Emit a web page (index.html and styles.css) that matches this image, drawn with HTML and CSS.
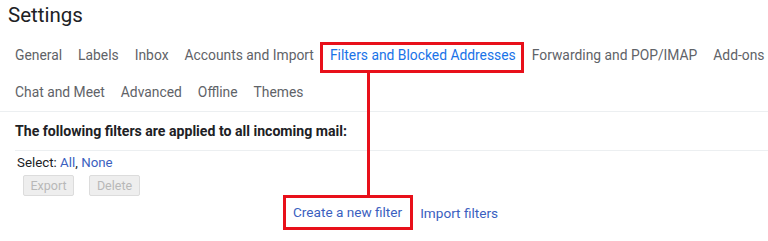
FILE: index.html
```html
<!DOCTYPE html>
<html>
<head>
<meta charset="utf-8">
<link rel="stylesheet" href="styles.css">
</head>
<body>
<div class="page">
  <h1 class="title">Settings</h1>
  <nav class="tabs">
    <span class="tab">General</span>
    <span class="tab">Labels</span>
    <span class="tab">Inbox</span>
    <span class="tab">Accounts and Import</span>
    <span class="tab active">Filters and Blocked Addresses</span>
    <span class="tab">Forwarding and POP/IMAP</span>
    <span class="tab">Add-ons</span>
    <span class="tab">Chat and Meet</span>
    <span class="tab">Advanced</span>
    <span class="tab">Offline</span>
    <span class="tab">Themes</span>
  </nav>
  <div class="heading">The following filters are applied to all incoming mail:</div>
  <div class="select">Select: <a class="link">All</a>, <a class="link">None</a></div>
  <div class="buttons">
    <span class="btn">Export</span>
    <span class="btn">Delete</span>
  </div>
  <div class="actions">
    <a class="link create">Create a new filter</a>
    <a class="link">Import filters</a>
  </div>
</div>
</body>
</html>
```

FILE: styles.css
```css
* { box-sizing: border-box; }
html, body { margin: 0; padding: 0; background: #fff; }
body {
  font-family: Roboto, "Liberation Sans", Arial, sans-serif;
  color: #202124;
  width: 768px;
  height: 241px;
  overflow: hidden;
}
.page { width: 768px; overflow: hidden; }
.title {
  margin: 0;
  height: 37px;
  padding-left: 8px;
  font-size: 20.5px;
  font-weight: 400;
  line-height: 30px;
  color: #202124;
}
.tabs {
  display: flex;
  flex-wrap: wrap;
  width: 790px;
  padding-left: 7px;
  border-bottom: 1px solid #eceff1;
}
.tab {
  padding: 0 8px;
  font-size: 13.85px;
  line-height: 37px;
  color: #5f6368;
  white-space: nowrap;
}
.tab.active {
  position: relative;
  color: #1a73e8;
}
.tab.active::after {
  content: "";
  position: absolute;
  left: -2px;
  right: 0;
  top: 5px;
  bottom: 1px;
  border: 3px solid #e8101a;
}
.heading {
  margin-left: 15px;
  font-size: 14.1px;
  font-weight: 700;
  line-height: 38px;
  height: 39px;
  color: #202124;
  border-bottom: 1px solid #eceff1;
}
.select {
  padding: 2px 0 0 17px;
  font-size: 13.3px;
  line-height: 20px;
  color: #202124;
}
.link { color: #3b5fc0; text-decoration: none; }
.buttons {
  display: flex;
  gap: 15px;
  margin: 2px 0 0 23px;
}
.btn {
  width: 51px;
  height: 21px;
  border: 1px solid #dcdcdc;
  border-radius: 2px;
  background: #eeeeee;
  color: #b8b8b8;
  font-size: 12.5px;
  line-height: 19px;
  text-align: center;
}
.actions {
  display: flex;
  align-items: center;
  gap: 7px;
  margin: -1px 0 0 283px;
  font-size: 13.6px;
}
.create {
  position: relative;
  display: inline-block;
  border: 3px solid #e8101a;
  padding: 0 8px 0 7px;
  line-height: 29px;
  white-space: nowrap;
}
.create::before {
  content: "";
  position: absolute;
  left: 81px;
  bottom: calc(100% + 3px);
  width: 3px;
  height: 122px;
  background: #e8101a;
}
```
